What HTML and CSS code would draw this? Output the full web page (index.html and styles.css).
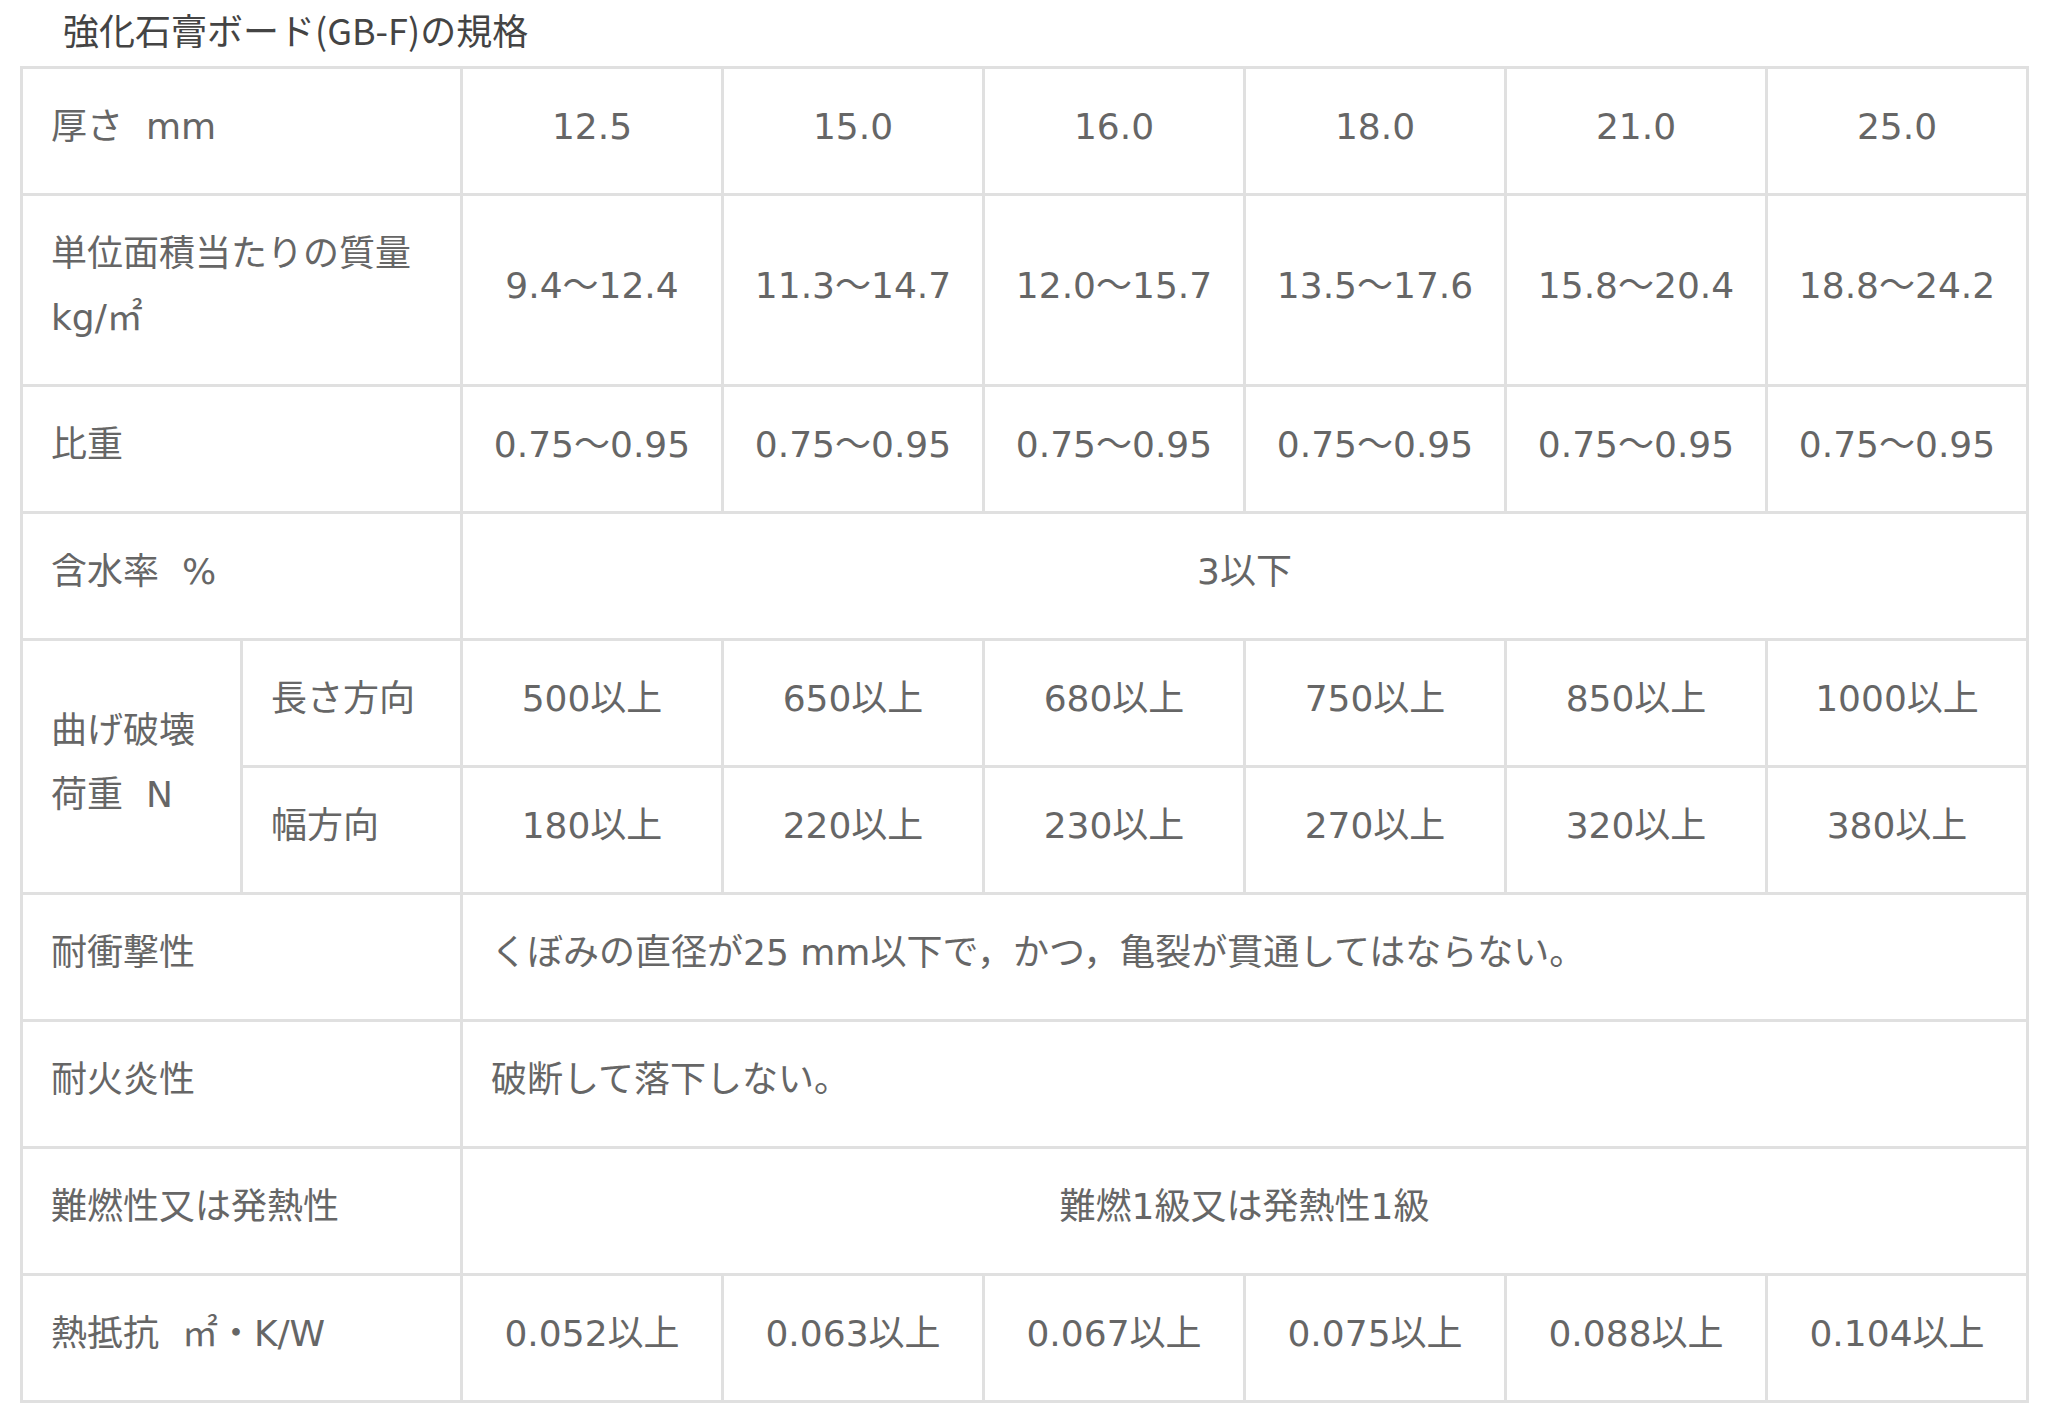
FILE: index.html
```html
<!DOCTYPE html>
<html lang="ja">
<head>
<meta charset="utf-8">
<title>強化石膏ボード(GB-F)の規格</title>
<link rel="stylesheet" href="styles.css">
</head>
<body>
<div class="page">
  <h2 class="title">強化石膏ボード(GB-F)の規格</h2>
  <table class="spec">
    <colgroup>
      <col class="c-lab1">
      <col class="c-lab2">
      <col class="c-val">
      <col class="c-val">
      <col class="c-val">
      <col class="c-val">
      <col class="c-val">
      <col class="c-val">
    </colgroup>
    <tbody>
      <tr>
        <th colspan="2">厚さ&nbsp; mm</th>
        <td>12.5</td><td>15.0</td><td>16.0</td><td>18.0</td><td>21.0</td><td>25.0</td>
      </tr>
      <tr>
        <th colspan="2">単位面積当たりの質量<br>kg/㎡</th>
        <td>9.4～12.4</td><td>11.3～14.7</td><td>12.0～15.7</td><td>13.5～17.6</td><td>15.8～20.4</td><td>18.8～24.2</td>
      </tr>
      <tr>
        <th colspan="2">比重</th>
        <td>0.75～0.95</td><td>0.75～0.95</td><td>0.75～0.95</td><td>0.75～0.95</td><td>0.75～0.95</td><td>0.75～0.95</td>
      </tr>
      <tr>
        <th colspan="2">含水率&nbsp; %</th>
        <td colspan="6">3以下</td>
      </tr>
      <tr>
        <th rowspan="2">曲げ破壊<br>荷重&nbsp; N</th>
        <th>長さ方向</th>
        <td>500以上</td><td>650以上</td><td>680以上</td><td>750以上</td><td>850以上</td><td>1000以上</td>
      </tr>
      <tr>
        <th>幅方向</th>
        <td>180以上</td><td>220以上</td><td>230以上</td><td>270以上</td><td>320以上</td><td>380以上</td>
      </tr>
      <tr>
        <th colspan="2">耐衝撃性</th>
        <td colspan="6" class="left">くぼみの直径が25 mm以下で，かつ，亀裂が貫通してはならない。</td>
      </tr>
      <tr>
        <th colspan="2">耐火炎性</th>
        <td colspan="6" class="left">破断して落下しない。</td>
      </tr>
      <tr>
        <th colspan="2">難燃性又は発熱性</th>
        <td colspan="6">難燃1級又は発熱性1級</td>
      </tr>
      <tr>
        <th colspan="2">熱抵抗&nbsp; ㎡・K/W</th>
        <td>0.052以上</td><td>0.063以上</td><td>0.067以上</td><td>0.075以上</td><td>0.088以上</td><td>0.104以上</td>
      </tr>
    </tbody>
  </table>
</div>
</body>
</html>
```

FILE: styles.css
```css
html, body {
  margin: 0;
  padding: 0;
  background: #ffffff;
}

body {
  font-family: "DejaVu Sans", "Noto Sans CJK JP", sans-serif;
  color: #666666;
}

.page {
  padding: 0 0 0 20px;
}

.title {
  margin: 5px 0 13px 43px;
  font-size: 36px;
  line-height: 48px;
  font-weight: 400;
  color: #444444;
  font-family: "Noto Sans CJK JP", sans-serif;
}

.spec {
  width: 2009px;
  table-layout: fixed;
  border-collapse: collapse;
  border: 3px solid #e0e0e0;
  font-size: 36px;
  line-height: 64px;
}

.c-lab1 { width: 220px; }
.c-lab2 { width: 220px; }
.c-val { width: 261px; }

.spec th,
.spec td {
  border: 3px solid #e0e0e0;
  padding: 26px 28px 34px;
  vertical-align: middle;
  font-weight: 400;
  white-space: nowrap;
}

.spec th {
  text-align: left;
}

.spec td {
  text-align: center;
}

.spec td.left {
  text-align: left;
}
```
